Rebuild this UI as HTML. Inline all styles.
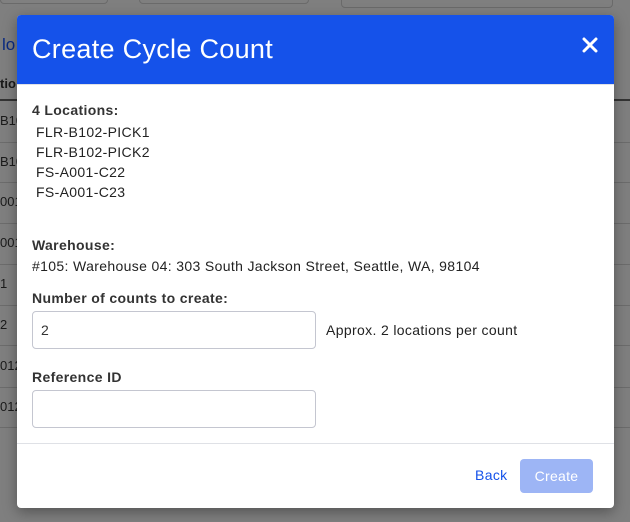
<!DOCTYPE html>
<html><head><style>
*{box-sizing:border-box;margin:0;padding:0}
body{width:630px;height:522px;overflow:hidden;background:#7f7f7f;font-family:"Liberation Sans",Arial,sans-serif;position:relative;color:#222}
.bg{position:absolute;color:#1a1a1a;font-size:13px}
.line{position:absolute;left:0;width:630px;height:1px;background:#6c6c6c}
.modal{position:absolute;left:17px;top:15px;width:597px;height:493px;background:#fff;border-radius:4px;box-shadow:0 4px 14px rgba(0,0,0,.35);overflow:hidden}
.hdr{height:69px;background:#1552ea;color:#fff;position:relative}
.hdr h1{font-weight:normal;font-size:27px;letter-spacing:0.3px;position:absolute;left:15px;top:19px}
.x{position:absolute;right:16px;top:22px}
.t{position:absolute;font-size:14px;letter-spacing:0.35px;color:#222}
b{font-weight:bold;color:#333}
.inp{position:absolute;border:1px solid #c4c6d0;border-radius:4px;width:284px;height:38px;font-size:14px;padding:10px 8px;color:#333}
</style></head><body>
<div class="bg" style="left:0;top:-6px;width:108px;height:10px;border:1px solid #6a6a6a;border-radius:4px;background:#808080"></div>
<div class="bg" style="left:139px;top:-6px;width:170px;height:10px;border:1px solid #6a6a6a;border-radius:4px"></div>
<div class="bg" style="left:341px;top:-6px;width:272px;height:14px;border:1px solid #6a6a6a;border-radius:4px"></div>
<div class="bg" style="left:2px;top:35px;font-size:17px;color:#0b2a80">lo</div>
<div class="bg" style="left:0;top:76px;font-weight:bold">tio</div>
<div class="line" style="top:99px;height:2px;background:#333"></div>
<div class="bg" style="left:0;top:113px">B10</div><div class="line" style="top:142px"></div>
<div class="bg" style="left:0;top:154px">B10</div><div class="line" style="top:182px"></div>
<div class="bg" style="left:0;top:194px">001</div><div class="line" style="top:223px"></div>
<div class="bg" style="left:0;top:235px">001</div><div class="line" style="top:264px"></div>
<div class="bg" style="left:0;top:276px">1</div><div class="line" style="top:305px"></div>
<div class="bg" style="left:0;top:317px">2</div><div class="line" style="top:345px"></div>
<div class="bg" style="left:0;top:358px">012</div><div class="line" style="top:387px"></div>
<div class="bg" style="left:0;top:399px">012</div><div class="line" style="top:427px"></div>
<div class="modal">
 <div class="hdr"><h1>Create Cycle Count</h1>
  <svg class="x" width="16" height="16" viewBox="0 0 16 16"><path d="M2 2L14 14M14 2L2 14" stroke="#fff" stroke-width="3" stroke-linecap="round"/></svg></div>
 <div style="height:1px;background:#dfe1e6"></div>
 <div class="t" style="left:15px;top:87px"><b>4 Locations:</b></div>
 <div class="t" style="left:19px;top:107px;line-height:20px">FLR-B102-PICK1<br>FLR-B102-PICK2<br>FS-A001-C22<br>FS-A001-C23</div>
 <div class="t" style="left:15px;top:222px"><b>Warehouse:</b></div>
 <div class="t" style="left:15px;top:243px">#105: Warehouse 04: 303 South Jackson Street, Seattle, WA, 98104</div>
 <div class="t" style="left:15px;top:275px"><b>Number of counts to create:</b></div>
 <div class="inp" style="left:15px;top:296px">2</div>
 <div class="t" style="left:309px;top:307px">Approx. 2 locations per count</div>
 <div class="t" style="left:15px;top:354px"><b>Reference ID</b></div>
 <div class="inp" style="left:15px;top:375px"></div>
 <div style="position:absolute;left:0;top:428px;width:597px;height:1px;background:#dfe1e6"></div>
 <div class="t" style="left:458px;top:452px;color:#1552ea;font-size:14px">Back</div>
 <div style="position:absolute;left:503px;top:444px;width:73px;height:34px;background:#9db5f5;border-radius:4px;color:#fff;font-size:14px;letter-spacing:0.3px;text-align:center;line-height:34px">Create</div>
</div>
</body></html>
